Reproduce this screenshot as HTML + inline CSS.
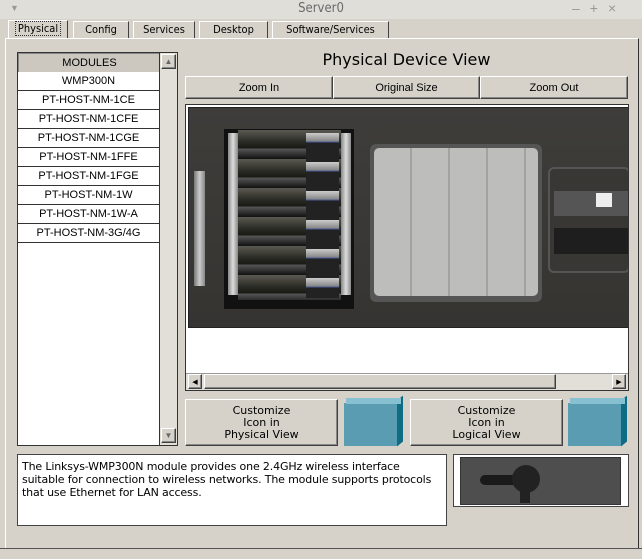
<!DOCTYPE html>
<html><head><style>
body{margin:0;width:642px;height:559px;background:#d6d2ca;font-family:"Liberation Sans",sans-serif;font-size:11px;position:relative;overflow:hidden}
.a{position:absolute;box-sizing:border-box}
.btn{background:#d6d2ca;border:1px solid;border-color:#fff #404040 #404040 #fff;box-shadow:inset -1px -1px 0 #888;text-align:center;display:flex;align-items:center;justify-content:center}
.tab{top:21px;height:18px;border:1px solid;border-color:#fff #404040 #d6d2ca #fff;text-align:center;line-height:16px;font-size:11px;font-family:"DejaVu Sans Condensed","DejaVu Sans",sans-serif}
.item{position:absolute;left:0;width:141px;height:18px;background:#fff;border-bottom:1px solid #333;text-align:center;line-height:18px;font-size:11px}
.dv{font-family:"DejaVu Sans",sans-serif}
</style></head><body>
<div class="a" style="left:0;top:0;width:642px;height:19px;background:#e0ded9;text-align:center;color:#6a6a6a;font-size:13px;line-height:18px;font-family:'DejaVu Sans Condensed','DejaVu Sans',sans-serif">Server0</div>
<div class="a" style="left:10px;top:3px;color:#999;font-size:9px">▼</div>
<div class="a" style="left:572px;top:0px;color:#999;font-size:14px;letter-spacing:10px">–+×</div>
<div class="a tab" style="left:8px;width:60px;border-bottom:none;background:#d6d2ca;top:20px"><span style="outline:1px dotted #333;padding:0 2px">Physical</span></div>
<div class="a tab" style="left:73px;width:56px">Config</div>
<div class="a tab" style="left:133px;width:62px">Services</div>
<div class="a tab" style="left:199px;width:69px">Desktop</div>
<div class="a tab" style="left:272px;width:117px">Software/Services</div>
<div class="a" style="left:5px;top:38px;width:634px;height:511px;border:1px solid;border-color:#fff #333 #333 #fff"></div>
<div class="a" style="left:0;top:548px;width:642px;height:11px;background:#d6d2ca;border-top:1px solid #555"></div>
<div class="a" style="left:17px;top:52px;width:161px;height:394px;border:1px solid #333;background:#fff">
 <div class="item" style="top:0;background:#ccc8c0;border:1px solid #888">MODULES</div>
 <div class="item" style="top:19px">WMP300N</div>
 <div class="item" style="top:38px">PT-HOST-NM-1CE</div>
 <div class="item" style="top:57px">PT-HOST-NM-1CFE</div>
 <div class="item" style="top:76px">PT-HOST-NM-1CGE</div>
 <div class="item" style="top:95px">PT-HOST-NM-1FFE</div>
 <div class="item" style="top:114px">PT-HOST-NM-1FGE</div>
 <div class="item" style="top:133px">PT-HOST-NM-1W</div>
 <div class="item" style="top:152px">PT-HOST-NM-1W-A</div>
 <div class="item" style="top:171px">PT-HOST-NM-3G/4G</div>
 <div class="a" style="left:141px;top:0;width:1px;height:392px;background:#333"></div>
 <div class="a" style="left:142px;top:0;width:17px;height:392px;background:#e2dfd9"></div>
 <div class="a btn" style="left:143px;top:1px;width:15px;height:15px;font-size:8px;color:#666">▲</div>
 <div class="a btn" style="left:143px;top:375px;width:15px;height:15px;font-size:8px;color:#666">▼</div>
</div>
<div class="a dv" style="left:185px;top:50px;width:443px;text-align:center;font-size:16px">Physical Device View</div>
<div class="a btn" style="left:185px;top:76px;width:148px;height:23px">Zoom In</div>
<div class="a btn" style="left:333px;top:76px;width:147px;height:23px">Original Size</div>
<div class="a btn" style="left:480px;top:76px;width:148px;height:23px">Zoom Out</div>
<div class="a" style="left:185px;top:104px;width:444px;height:287px;border:1px solid #333;background:#fff;overflow:hidden">
 <div class="a" style="left:2px;top:2px;width:442px;height:221px;background:linear-gradient(#3e3d3a,#353431);border:1px solid #222"></div>
 <div class="a" style="left:8px;top:66px;width:11px;height:115px;background:linear-gradient(90deg,#777,#ccc,#888)"></div>
 <div class="a" style="left:38px;top:24px;width:130px;height:180px;background:#111"></div>
 <div class="a" style="left:42px;top:28px;width:10px;height:162px;background:linear-gradient(90deg,#888,#ddd,#888)"></div>
 <div class="a" style="left:155px;top:28px;width:10px;height:162px;background:linear-gradient(90deg,#888,#ddd,#888)"></div>
 <div class="a" style="left:52px;top:25px;width:103px;height:170px;background:repeating-linear-gradient(#5a5a52 0,#2a2a24 12px,#1a1a14 18px,#555 19px,#111 29px)"></div>
 <div class="a" style="left:120px;top:28px;width:33px;height:165px;background:repeating-linear-gradient(#ccc 0,#888 8px,#4a5a9a 9px,#222 10px,#222 29px)"></div>
 <div class="a" style="left:184px;top:39px;width:172px;height:158px;background:#555;border-radius:6px"></div>
 <div class="a" style="left:188px;top:43px;width:164px;height:148px;background:#bdbdbb;border-radius:5px;background-image:repeating-linear-gradient(90deg,transparent 0,transparent 36px,#888 37px,transparent 38px)"></div>
 <div class="a" style="left:362px;top:62px;width:82px;height:106px;background:#383734;border:2px solid #555;border-radius:6px"></div>
 <div class="a" style="left:368px;top:86px;width:76px;height:25px;background:#555"></div>
 <div class="a" style="left:368px;top:123px;width:76px;height:26px;background:#1e1e1e"></div>
 <div class="a" style="left:410px;top:88px;width:16px;height:14px;background:#eee"></div>
 <div class="a" style="left:0;top:268px;width:442px;height:17px;background:#e2dfd9;border-top:1px solid #999"></div>
 <div class="a btn" style="left:2px;top:269px;width:14px;height:15px;font-size:7px">◀</div>
 <div class="a btn" style="left:18px;top:269px;width:352px;height:15px"></div>
 <div class="a btn" style="left:426px;top:269px;width:14px;height:15px;font-size:7px">▶</div>
</div>
<div class="a btn dv" style="left:185px;top:399px;width:153px;height:47px;line-height:12px">Customize<br>Icon in<br>Physical View</div>
<div class="a" style="left:344px;top:403px;width:54px;height:43px;background:#5a9db2"></div>
<div class="a" style="left:397px;top:398px;width:6px;height:46px;background:#0e6d85;transform:skewY(-40deg)"></div>
<div class="a" style="left:346px;top:398px;width:55px;height:6px;background:#86c0d1"></div>
<div class="a btn dv" style="left:410px;top:399px;width:153px;height:47px;line-height:12px">Customize<br>Icon in<br>Logical View</div>
<div class="a" style="left:568px;top:403px;width:54px;height:43px;background:#5a9db2"></div>
<div class="a" style="left:621px;top:398px;width:6px;height:46px;background:#0e6d85;transform:skewY(-40deg)"></div>
<div class="a" style="left:570px;top:398px;width:55px;height:6px;background:#86c0d1"></div>
<div class="a dv" style="left:17px;top:454px;width:430px;height:72px;background:#fff;border:1px solid #444;padding:5px 4px;font-size:11px;line-height:13px;letter-spacing:-0.15px">The Linksys-WMP300N module provides one 2.4GHz wireless interface suitable for connection to wireless networks. The module supports protocols that use Ethernet for LAN access.</div>
<div class="a" style="left:453px;top:454px;width:176px;height:53px;background:#fff;border:1px solid #444"></div>
<div class="a" style="left:460px;top:457px;width:161px;height:48px;background:#4e4e4e;border:1px solid #333"></div>
<div class="a" style="left:480px;top:475px;width:50px;height:10px;background:#1a1a1a;border-radius:5px"></div>
<div class="a" style="left:512px;top:465px;width:28px;height:28px;background:#222;border-radius:50%"></div>
<div class="a" style="left:520px;top:485px;width:10px;height:18px;background:#222"></div>
</body></html>
